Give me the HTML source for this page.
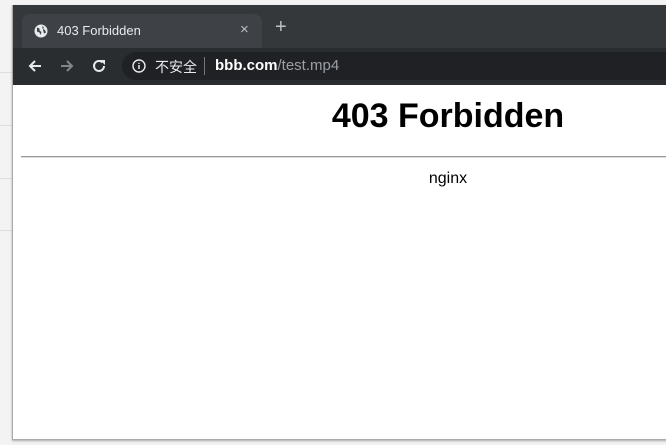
<!DOCTYPE html>
<html><head><style>
body{margin:0;width:666px;height:445px;overflow:hidden;background:#f3f3f3;position:relative;font-family:"Liberation Sans","Noto Sans CJK SC",sans-serif}
.bgline{position:absolute;left:0;width:12px;height:1px;background:#ddd}
.win{position:absolute;left:12px;top:5px;width:700px;height:434px;background:#fff;border-left:1px solid #aaa;border-bottom:1px solid #aaa;overflow:hidden;box-shadow:0 1px 2px rgba(0,0,0,.3)}
.strip{position:absolute;left:0;top:0;width:100%;height:43px;background:#35383b}
.tab{position:absolute;left:9px;top:9px;width:240px;height:34px;background:#3e4145;border-radius:8px 8px 0 0;color:#e8eaed;font-size:13px}
.tb{position:absolute;left:0;top:43px;width:100%;height:37px;background:#2a2d30}
.omni{position:absolute;left:109px;top:4px;width:600px;height:28px;border-radius:14px;background:#202124;color:#e8eaed;font-size:14px}
.content{position:absolute;left:0;top:80px;width:870px;text-align:center;color:#000}
h1{margin:0;position:absolute;top:11px;width:100%;font-size:34px;font-weight:bold;line-height:40px}
hr{position:absolute;top:71px;left:8px;width:854px;margin:0;border:0;border-top:1px solid #999;border-bottom:1px solid #ddd}
.ng{position:absolute;top:85px;width:100%;font-size:16px}
</style></head><body>
<div class="bgline" style="top:72px"></div><div class="bgline" style="top:125px"></div><div class="bgline" style="top:178px"></div><div class="bgline" style="top:230px"></div>
<div class="win">
<div class="strip"></div>
<div class="tab">
<svg style="position:absolute;left:12px;top:10px" width="14" height="14" viewBox="0 0 14 14"><circle cx="7" cy="7" r="6.5" fill="#e8eaed"/><path d="M3 3.5l2.5 1 0 2 2 1.5-1 3 -1-2.5-2.5-1z M8 2l2 1.5-1 1.5 2 1 1 2.5-2 1z" fill="#3e4145"/></svg>
<span style="position:absolute;left:35px;top:9px">403 Forbidden</span>
<span style="position:absolute;left:218px;top:7px;font-size:15px;color:#bdc1c6">×</span>
</div>
<span style="position:absolute;left:262px;top:12px;font-size:20px;color:#bdc1c6;line-height:20px">+</span>
<div class="tb">
<svg style="position:absolute;left:14px;top:10px" width="16" height="16" viewBox="0 0 16 16"><path d="M14 8H3M8 3L3 8l5 5" stroke="#e8eaed" stroke-width="2" fill="none"/></svg>
<svg style="position:absolute;left:46px;top:10px" width="16" height="16" viewBox="0 0 16 16"><path d="M2 8h11M8 3l5 5-5 5" stroke="#80868b" stroke-width="2" fill="none"/></svg>
<svg style="position:absolute;left:78px;top:10px" width="16" height="16" viewBox="0 0 16 16"><path d="M13 8a5 5 0 1 1-1.5-3.6" stroke="#e8eaed" stroke-width="2" fill="none"/><path d="M9 2h5v5z" fill="#e8eaed"/></svg>
<div class="omni">
<svg style="position:absolute;left:10px;top:7px" width="14" height="14" viewBox="0 0 14 14"><circle cx="7" cy="7" r="6" stroke="#e8eaed" stroke-width="1.4" fill="none"/><path d="M7 6v4M7 3.7v1.2" stroke="#e8eaed" stroke-width="1.5"/></svg>
<span style="position:absolute;left:33px;top:5px">不安全</span>
<span style="position:absolute;left:82px;top:5px;width:1px;height:18px;background:#777"></span>
<span style="position:absolute;left:93px;top:5px;font-size:15px"><span style="font-weight:bold;color:#fff">bbb.com</span><span style="color:#9aa0a6">/test.mp4</span></span>
</div>
</div>
<div class="content"><h1>403 Forbidden</h1><hr><div class="ng">nginx</div></div>
</div>
</body></html>
